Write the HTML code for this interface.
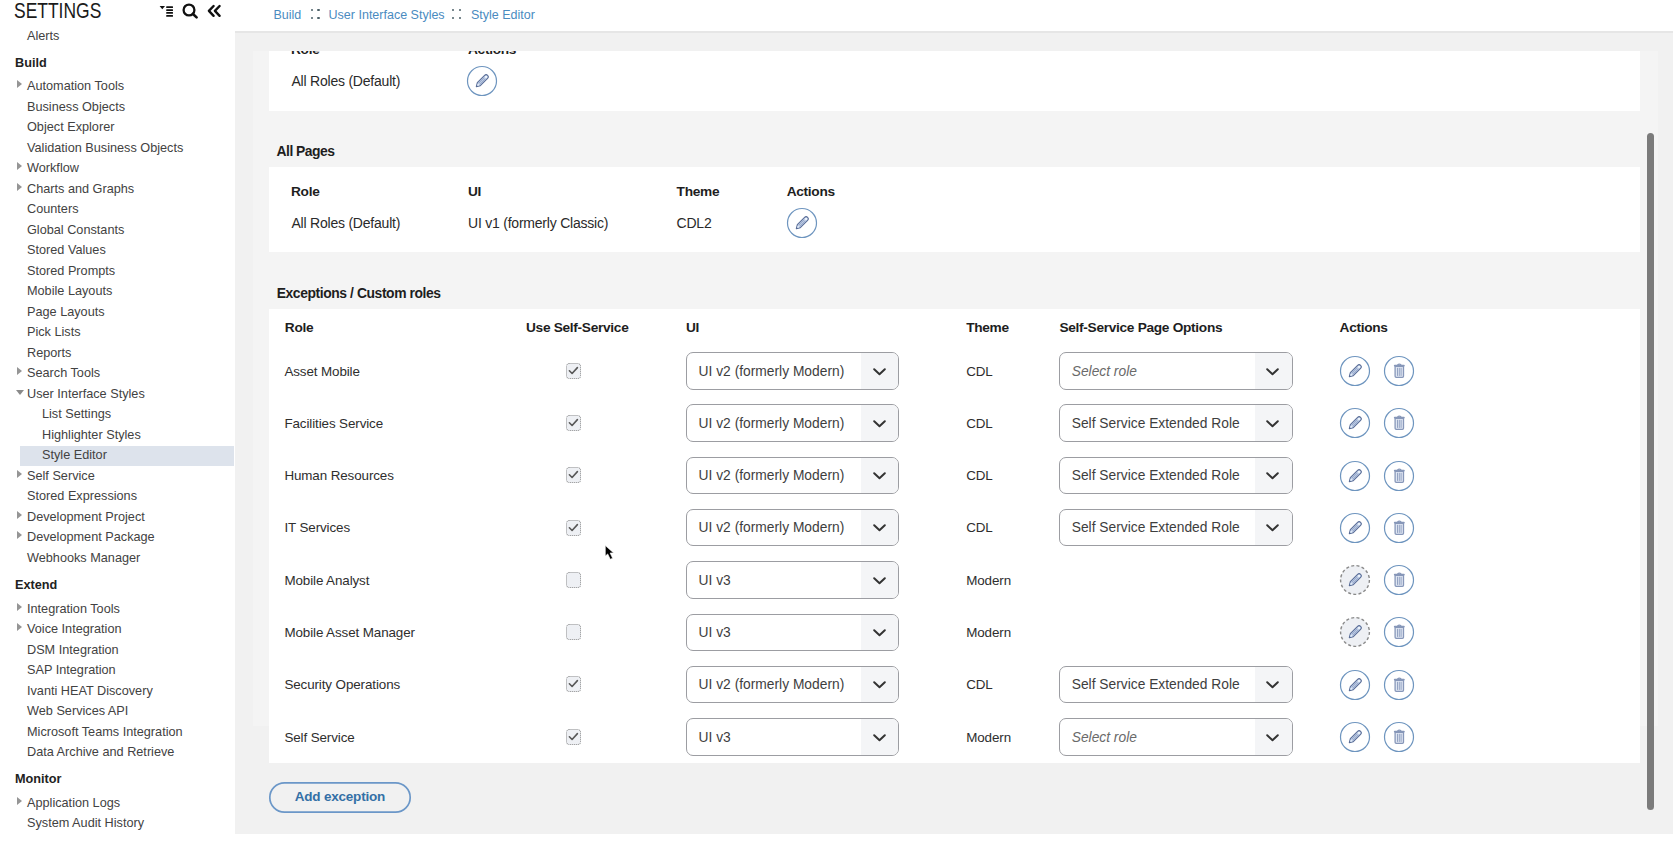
<!DOCTYPE html><html><head><meta charset="utf-8"><style>
html,body{margin:0;padding:0;}
body{width:1673px;height:848px;overflow:hidden;position:relative;background:#fff;font-family:"Liberation Sans",sans-serif;}
.t{position:absolute;line-height:20px;white-space:nowrap;}
.a{position:absolute;}
.card{position:absolute;background:#fff;}
.sel{position:absolute;box-sizing:border-box;border:1.8px solid #9c9da2;border-radius:7px;background:#fff;overflow:hidden;}
.sel .arr{position:absolute;right:0;top:0;bottom:0;width:37px;background:#f4f5f7;}
.cb{position:absolute;box-sizing:border-box;width:15px;height:16px;border:1px dotted #8f8f8f;border-radius:3.5px;background:#eef0f4;}
.circ{position:absolute;box-sizing:border-box;width:30px;height:30px;border:1.4px solid #6e93bd;border-radius:50%;}
.circ.dis{border:1.2px dashed #8a8a8a;background:#eef0f3;}
.tri{position:absolute;width:0;height:0;border-top:4.2px solid transparent;border-bottom:4.2px solid transparent;border-left:5.6px solid #959595;}
.trid{position:absolute;width:0;height:0;border-left:4.1px solid transparent;border-right:4.1px solid transparent;border-top:5.4px solid #8a8a8a;}
</style></head><body>

<div class="t" style="left:13.8px;top:0.5px;font-size:21.5px;color:#1b1b1b;transform:scaleX(0.812);transform-origin:0 0;">SETTINGS</div>
<svg class="a" style="left:155px;top:0px" width="75" height="24" viewBox="0 0 75 24">
<path d="M4.6 5.9 L10 5.9 L7.3 9.3 Z" fill="#111"/>
<rect x="11.2" y="6.2" width="6.8" height="1.7" rx="0.5" fill="#111"/>
<rect x="11.2" y="9.2" width="6.8" height="1.7" rx="0.5" fill="#111"/>
<rect x="11.2" y="12.1" width="6.8" height="1.7" rx="0.5" fill="#111"/>
<rect x="11.2" y="15.0" width="6.8" height="1.7" rx="0.5" fill="#111"/>
<circle cx="34" cy="10" r="5.4" fill="none" stroke="#111" stroke-width="2.3"/>
<path d="M38 14 L41.6 17.4" stroke="#111" stroke-width="2.6" stroke-linecap="round"/>
<path d="M58.6 6 L53.9 10.9 L58.6 15.8" fill="none" stroke="#111" stroke-width="2.4" stroke-linecap="round" stroke-linejoin="round"/>
<path d="M64.6 6 L59.9 10.9 L64.6 15.8" fill="none" stroke="#111" stroke-width="2.4" stroke-linecap="round" stroke-linejoin="round"/>
</svg>
<div class="t" style="left:27px;top:25.799999999999997px;font-size:12.7px;font-weight:normal;color:#424242;font-style:normal;letter-spacing:0px;">Alerts</div>
<div class="t" style="left:15px;top:52.5px;font-size:12.7px;font-weight:bold;color:#222;font-style:normal;letter-spacing:0px;">Build</div>
<div class="tri" style="left:16.8px;top:80.0px"></div>
<div class="t" style="left:27px;top:76.0px;font-size:12.7px;font-weight:normal;color:#424242;font-style:normal;letter-spacing:0px;">Automation Tools</div>
<div class="t" style="left:27px;top:96.5px;font-size:12.7px;font-weight:normal;color:#424242;font-style:normal;letter-spacing:0px;">Business Objects</div>
<div class="t" style="left:27px;top:117.0px;font-size:12.7px;font-weight:normal;color:#424242;font-style:normal;letter-spacing:0px;">Object Explorer</div>
<div class="t" style="left:27px;top:137.5px;font-size:12.7px;font-weight:normal;color:#424242;font-style:normal;letter-spacing:0px;">Validation Business Objects</div>
<div class="tri" style="left:16.8px;top:162.0px"></div>
<div class="t" style="left:27px;top:158.0px;font-size:12.7px;font-weight:normal;color:#424242;font-style:normal;letter-spacing:0px;">Workflow</div>
<div class="tri" style="left:16.8px;top:182.5px"></div>
<div class="t" style="left:27px;top:178.5px;font-size:12.7px;font-weight:normal;color:#424242;font-style:normal;letter-spacing:0px;">Charts and Graphs</div>
<div class="t" style="left:27px;top:199.0px;font-size:12.7px;font-weight:normal;color:#424242;font-style:normal;letter-spacing:0px;">Counters</div>
<div class="t" style="left:27px;top:219.5px;font-size:12.7px;font-weight:normal;color:#424242;font-style:normal;letter-spacing:0px;">Global Constants</div>
<div class="t" style="left:27px;top:240.0px;font-size:12.7px;font-weight:normal;color:#424242;font-style:normal;letter-spacing:0px;">Stored Values</div>
<div class="t" style="left:27px;top:260.5px;font-size:12.7px;font-weight:normal;color:#424242;font-style:normal;letter-spacing:0px;">Stored Prompts</div>
<div class="t" style="left:27px;top:281.0px;font-size:12.7px;font-weight:normal;color:#424242;font-style:normal;letter-spacing:0px;">Mobile Layouts</div>
<div class="t" style="left:27px;top:301.5px;font-size:12.7px;font-weight:normal;color:#424242;font-style:normal;letter-spacing:0px;">Page Layouts</div>
<div class="t" style="left:27px;top:322.0px;font-size:12.7px;font-weight:normal;color:#424242;font-style:normal;letter-spacing:0px;">Pick Lists</div>
<div class="t" style="left:27px;top:342.5px;font-size:12.7px;font-weight:normal;color:#424242;font-style:normal;letter-spacing:0px;">Reports</div>
<div class="tri" style="left:16.8px;top:367.0px"></div>
<div class="t" style="left:27px;top:363.0px;font-size:12.7px;font-weight:normal;color:#424242;font-style:normal;letter-spacing:0px;">Search Tools</div>
<div class="trid" style="left:15.5px;top:389.5px"></div>
<div class="t" style="left:27px;top:383.5px;font-size:12.7px;font-weight:normal;color:#424242;font-style:normal;letter-spacing:0px;">User Interface Styles</div>
<div class="t" style="left:42px;top:404.0px;font-size:12.7px;font-weight:normal;color:#424242;font-style:normal;letter-spacing:0px;">List Settings</div>
<div class="t" style="left:42px;top:424.5px;font-size:12.7px;font-weight:normal;color:#424242;font-style:normal;letter-spacing:0px;">Highlighter Styles</div>
<div class="a" style="left:20px;top:445.7px;width:213.5px;height:20.3px;background:#dde3ec"></div>
<div class="t" style="left:42px;top:445.0px;font-size:12.7px;font-weight:normal;color:#424242;font-style:normal;letter-spacing:0px;">Style Editor</div>
<div class="tri" style="left:16.8px;top:469.5px"></div>
<div class="t" style="left:27px;top:465.5px;font-size:12.7px;font-weight:normal;color:#424242;font-style:normal;letter-spacing:0px;">Self Service</div>
<div class="t" style="left:27px;top:486.0px;font-size:12.7px;font-weight:normal;color:#424242;font-style:normal;letter-spacing:0px;">Stored Expressions</div>
<div class="tri" style="left:16.8px;top:510.5px"></div>
<div class="t" style="left:27px;top:506.5px;font-size:12.7px;font-weight:normal;color:#424242;font-style:normal;letter-spacing:0px;">Development Project</div>
<div class="tri" style="left:16.8px;top:531.0px"></div>
<div class="t" style="left:27px;top:527.0px;font-size:12.7px;font-weight:normal;color:#424242;font-style:normal;letter-spacing:0px;">Development Package</div>
<div class="t" style="left:27px;top:547.5px;font-size:12.7px;font-weight:normal;color:#424242;font-style:normal;letter-spacing:0px;">Webhooks Manager</div>
<div class="t" style="left:15px;top:575.2px;font-size:12.7px;font-weight:bold;color:#222;font-style:normal;letter-spacing:0px;">Extend</div>
<div class="tri" style="left:16.8px;top:602.5px"></div>
<div class="t" style="left:27px;top:598.5px;font-size:12.7px;font-weight:normal;color:#424242;font-style:normal;letter-spacing:0px;">Integration Tools</div>
<div class="tri" style="left:16.8px;top:623.0px"></div>
<div class="t" style="left:27px;top:619.0px;font-size:12.7px;font-weight:normal;color:#424242;font-style:normal;letter-spacing:0px;">Voice Integration</div>
<div class="t" style="left:27px;top:639.5px;font-size:12.7px;font-weight:normal;color:#424242;font-style:normal;letter-spacing:0px;">DSM Integration</div>
<div class="t" style="left:27px;top:660.0px;font-size:12.7px;font-weight:normal;color:#424242;font-style:normal;letter-spacing:0px;">SAP Integration</div>
<div class="t" style="left:27px;top:680.5px;font-size:12.7px;font-weight:normal;color:#424242;font-style:normal;letter-spacing:0px;">Ivanti HEAT Discovery</div>
<div class="t" style="left:27px;top:701.0px;font-size:12.7px;font-weight:normal;color:#424242;font-style:normal;letter-spacing:0px;">Web Services API</div>
<div class="t" style="left:27px;top:721.5px;font-size:12.7px;font-weight:normal;color:#424242;font-style:normal;letter-spacing:0px;">Microsoft Teams Integration</div>
<div class="t" style="left:27px;top:742.0px;font-size:12.7px;font-weight:normal;color:#424242;font-style:normal;letter-spacing:0px;">Data Archive and Retrieve</div>
<div class="t" style="left:15px;top:769.2px;font-size:12.7px;font-weight:bold;color:#222;font-style:normal;letter-spacing:0px;">Monitor</div>
<div class="tri" style="left:16.8px;top:796.5px"></div>
<div class="t" style="left:27px;top:792.5px;font-size:12.7px;font-weight:normal;color:#424242;font-style:normal;letter-spacing:0px;">Application Logs</div>
<div class="t" style="left:27px;top:813px;font-size:12.7px;font-weight:normal;color:#424242;font-style:normal;letter-spacing:0px;">System Audit History</div>
<div class="t" style="left:273.4px;top:4.699999999999999px;font-size:12.5px;font-weight:normal;color:#4a8bbf;font-style:normal;letter-spacing:0px;">Build</div>
<div class="a" style="left:310.7px;top:8.7px;width:2.2px;height:2.2px;border-radius:50%;background:#4d6168"></div>
<div class="a" style="left:310.7px;top:16.5px;width:2.2px;height:2.2px;border-radius:50%;background:#4d6168"></div>
<div class="a" style="left:317.4px;top:8.7px;width:2.2px;height:2.2px;border-radius:50%;background:#4d6168"></div>
<div class="a" style="left:317.4px;top:16.5px;width:2.2px;height:2.2px;border-radius:50%;background:#4d6168"></div>
<div class="t" style="left:328.6px;top:4.699999999999999px;font-size:12.5px;font-weight:normal;color:#4a8bbf;font-style:normal;letter-spacing:0px;">User Interface Styles</div>
<div class="a" style="left:452.3px;top:8.7px;width:2.2px;height:2.2px;border-radius:50%;background:#4d6168"></div>
<div class="a" style="left:452.3px;top:16.5px;width:2.2px;height:2.2px;border-radius:50%;background:#4d6168"></div>
<div class="a" style="left:459.0px;top:8.7px;width:2.2px;height:2.2px;border-radius:50%;background:#4d6168"></div>
<div class="a" style="left:459.0px;top:16.5px;width:2.2px;height:2.2px;border-radius:50%;background:#4d6168"></div>
<div class="t" style="left:470.9px;top:4.699999999999999px;font-size:12.5px;font-weight:normal;color:#4a8bbf;font-style:normal;letter-spacing:0px;">Style Editor</div>
<div class="a" style="left:235px;top:31px;width:1438px;height:802.5px;background:#f1f1f1"></div>
<div class="a" style="left:235px;top:31px;width:1438px;height:2px;background:#e6e6e6"></div>
<div class="a" style="left:253px;top:51px;width:1405px;height:674.5px;background:#f4f4f4"></div>
<div class="card" style="left:269px;top:24.6px;width:1371px;height:86.4px"></div>
<div class="t" style="left:291px;top:40.2px;font-size:13.7px;font-weight:bold;color:#1e1e1e;font-style:normal;letter-spacing:-0.3px;">Role</div>
<div class="t" style="left:468px;top:40.2px;font-size:13.7px;font-weight:bold;color:#1e1e1e;font-style:normal;letter-spacing:-0.3px;">Actions</div>
<div class="t" style="left:291.5px;top:70.7px;font-size:14px;font-weight:normal;color:#2a2a2a;font-style:normal;letter-spacing:-0.22px;">All Roles (Default)</div>
<svg class="a" style="left:466.4px;top:64.7px" width="32" height="32" viewBox="0 0 32 32"><circle cx="16" cy="16" r="14.5" fill="none" stroke="#6e95bf" stroke-width="1.2"/>
<g transform="rotate(45 16 16)"><path d="M13.85 10.2 A2.15 2.15 0 0 1 18.15 10.2 V20.5 L16 24.1 L13.85 20.5 Z" fill="#bfcde6" stroke="#586c96" stroke-width="1" stroke-linejoin="round"/>
<circle cx="16" cy="10.2" r="1.2" fill="#eef5fc"/><circle cx="16" cy="21.4" r="0.9" fill="#e4eefa"/>
<path d="M15.3 12.4 V19.6 M16.7 12.4 V19.6" stroke="#8094ba" stroke-width="0.55"/></g></svg>
<div class="a" style="left:235px;top:31px;width:1438px;height:20px;background:#f1f1f1"></div>
<div class="a" style="left:235px;top:31px;width:1438px;height:2px;background:#e6e6e6"></div>
<div class="t" style="left:276.5px;top:140.9px;font-size:13.9px;font-weight:bold;color:#1e1e1e;font-style:normal;letter-spacing:-0.5px;">All Pages</div>
<div class="card" style="left:269px;top:167px;width:1371px;height:84.6px"></div>
<div class="t" style="left:291px;top:182px;font-size:13.7px;font-weight:bold;color:#1e1e1e;font-style:normal;letter-spacing:-0.3px;">Role</div>
<div class="t" style="left:468px;top:182px;font-size:13.7px;font-weight:bold;color:#1e1e1e;font-style:normal;letter-spacing:-0.3px;">UI</div>
<div class="t" style="left:676.6px;top:182px;font-size:13.7px;font-weight:bold;color:#1e1e1e;font-style:normal;letter-spacing:-0.3px;">Theme</div>
<div class="t" style="left:786.7px;top:182px;font-size:13.7px;font-weight:bold;color:#1e1e1e;font-style:normal;letter-spacing:-0.3px;">Actions</div>
<div class="t" style="left:291.5px;top:213.3px;font-size:14px;font-weight:normal;color:#2a2a2a;font-style:normal;letter-spacing:-0.22px;">All Roles (Default)</div>
<div class="t" style="left:468px;top:213.3px;font-size:14px;font-weight:normal;color:#2a2a2a;font-style:normal;letter-spacing:-0.22px;">UI v1 (formerly Classic)</div>
<div class="t" style="left:676.6px;top:213.3px;font-size:14px;font-weight:normal;color:#2a2a2a;font-style:normal;letter-spacing:-0.22px;">CDL2</div>
<svg class="a" style="left:785.5px;top:206.6px" width="32" height="32" viewBox="0 0 32 32"><circle cx="16" cy="16" r="14.5" fill="none" stroke="#6e95bf" stroke-width="1.2"/>
<g transform="rotate(45 16 16)"><path d="M13.85 10.2 A2.15 2.15 0 0 1 18.15 10.2 V20.5 L16 24.1 L13.85 20.5 Z" fill="#bfcde6" stroke="#586c96" stroke-width="1" stroke-linejoin="round"/>
<circle cx="16" cy="10.2" r="1.2" fill="#eef5fc"/><circle cx="16" cy="21.4" r="0.9" fill="#e4eefa"/>
<path d="M15.3 12.4 V19.6 M16.7 12.4 V19.6" stroke="#8094ba" stroke-width="0.55"/></g></svg>
<div class="t" style="left:276.7px;top:282.5px;font-size:13.9px;font-weight:bold;color:#1e1e1e;font-style:normal;letter-spacing:-0.42px;">Exceptions / Custom roles</div>
<div class="card" style="left:269px;top:308.5px;width:1371px;height:454.5px"></div>
<div class="t" style="left:284.8px;top:318.3px;font-size:13.7px;font-weight:bold;color:#1e1e1e;font-style:normal;letter-spacing:-0.3px;">Role</div>
<div class="t" style="left:526px;top:318.3px;font-size:13.7px;font-weight:bold;color:#1e1e1e;font-style:normal;letter-spacing:-0.3px;">Use Self-Service</div>
<div class="t" style="left:686px;top:318.3px;font-size:13.7px;font-weight:bold;color:#1e1e1e;font-style:normal;letter-spacing:-0.3px;">UI</div>
<div class="t" style="left:966.2px;top:318.3px;font-size:13.7px;font-weight:bold;color:#1e1e1e;font-style:normal;letter-spacing:-0.3px;">Theme</div>
<div class="t" style="left:1059.4px;top:318.3px;font-size:13.7px;font-weight:bold;color:#1e1e1e;font-style:normal;letter-spacing:-0.3px;">Self-Service Page Options</div>
<div class="t" style="left:1339.6px;top:318.3px;font-size:13.7px;font-weight:bold;color:#1e1e1e;font-style:normal;letter-spacing:-0.3px;">Actions</div>
<div class="t" style="left:284.4px;top:361.5px;font-size:13.4px;font-weight:normal;color:#2e2e2e;font-style:normal;letter-spacing:-0.1px;">Asset Mobile</div>
<div class="cb" style="left:566.2px;top:362.6px"></div>
<svg class="a" style="left:566.2px;top:362.6px" width="15" height="15" viewBox="0 0 15 15"><path d="M3.4 7.8 L6.1 10.5 L11.4 4.6" fill="none" stroke="#585858" stroke-width="1.6" stroke-linecap="round" stroke-linejoin="round"/></svg>
<div class="sel" style="left:686px;top:352.0px;width:213px;height:37.5px"><div class="arr"></div><svg class="a" style="right:12.5px;top:14.5px" width="13" height="8" viewBox="0 0 13 8"><path d="M1.2 1.3 L6.5 6.3 L11.8 1.3" fill="none" stroke="#333" stroke-width="2" stroke-linecap="round" stroke-linejoin="round"/></svg></div>
<div class="t" style="left:698.6px;top:361.5px;font-size:13.8px;font-weight:normal;color:#3e3e3e;font-style:normal;letter-spacing:0px;">UI v2 (formerly Modern)</div>
<div class="t" style="left:966.2px;top:361.5px;font-size:13.4px;font-weight:normal;color:#2e2e2e;font-style:normal;letter-spacing:-0.1px;">CDL</div>
<div class="sel" style="left:1059.4px;top:352.0px;width:233.6px;height:37.5px"><div class="arr"></div><svg class="a" style="right:12.5px;top:14.5px" width="13" height="8" viewBox="0 0 13 8"><path d="M1.2 1.3 L6.5 6.3 L11.8 1.3" fill="none" stroke="#333" stroke-width="2" stroke-linecap="round" stroke-linejoin="round"/></svg></div>
<div class="t" style="left:1071.7px;top:361.5px;font-size:13.8px;font-weight:normal;color:#6a6a6a;font-style:italic;letter-spacing:0px;">Select role</div>
<svg class="a" style="left:1338.6px;top:354.9px" width="32" height="32" viewBox="0 0 32 32"><circle cx="16" cy="16" r="14.5" fill="none" stroke="#6e95bf" stroke-width="1.2"/>
<g transform="rotate(45 16 16)"><path d="M13.85 10.2 A2.15 2.15 0 0 1 18.15 10.2 V20.5 L16 24.1 L13.85 20.5 Z" fill="#bfcde6" stroke="#586c96" stroke-width="1" stroke-linejoin="round"/>
<circle cx="16" cy="10.2" r="1.2" fill="#eef5fc"/><circle cx="16" cy="21.4" r="0.9" fill="#e4eefa"/>
<path d="M15.3 12.4 V19.6 M16.7 12.4 V19.6" stroke="#8094ba" stroke-width="0.55"/></g></svg>
<svg class="a" style="left:1383.0px;top:354.9px" width="32" height="32" viewBox="0 0 32 32">
<circle cx="16" cy="16" r="14.5" fill="none" stroke="#6e95bf" stroke-width="1.2"/>
<path d="M11.7 10.6 H20.9" stroke="#8797b9" stroke-width="1.7" stroke-linecap="round"/>
<path d="M14.4 10 Q16.3 8.3 18.2 10" fill="none" stroke="#8797b9" stroke-width="1.1"/>
<path d="M12.1 11.4 H20.5 V21.3 Q20.5 22.4 19.4 22.4 H13.2 Q12.1 22.4 12.1 21.3 Z" fill="#dfe6f2" stroke="#8797b9" stroke-width="1.3"/>
<path d="M14.5 12.8 V20.9 M16.3 12.8 V20.9 M18.1 12.8 V20.9" stroke="#8b9bbc" stroke-width="0.9"/></svg>
<div class="t" style="left:284.4px;top:413.8px;font-size:13.4px;font-weight:normal;color:#2e2e2e;font-style:normal;letter-spacing:-0.1px;">Facilities Service</div>
<div class="cb" style="left:566.2px;top:414.9px"></div>
<svg class="a" style="left:566.2px;top:414.9px" width="15" height="15" viewBox="0 0 15 15"><path d="M3.4 7.8 L6.1 10.5 L11.4 4.6" fill="none" stroke="#585858" stroke-width="1.6" stroke-linecap="round" stroke-linejoin="round"/></svg>
<div class="sel" style="left:686px;top:404.3px;width:213px;height:37.5px"><div class="arr"></div><svg class="a" style="right:12.5px;top:14.5px" width="13" height="8" viewBox="0 0 13 8"><path d="M1.2 1.3 L6.5 6.3 L11.8 1.3" fill="none" stroke="#333" stroke-width="2" stroke-linecap="round" stroke-linejoin="round"/></svg></div>
<div class="t" style="left:698.6px;top:413.8px;font-size:13.8px;font-weight:normal;color:#3e3e3e;font-style:normal;letter-spacing:0px;">UI v2 (formerly Modern)</div>
<div class="t" style="left:966.2px;top:413.8px;font-size:13.4px;font-weight:normal;color:#2e2e2e;font-style:normal;letter-spacing:-0.1px;">CDL</div>
<div class="sel" style="left:1059.4px;top:404.3px;width:233.6px;height:37.5px"><div class="arr"></div><svg class="a" style="right:12.5px;top:14.5px" width="13" height="8" viewBox="0 0 13 8"><path d="M1.2 1.3 L6.5 6.3 L11.8 1.3" fill="none" stroke="#333" stroke-width="2" stroke-linecap="round" stroke-linejoin="round"/></svg></div>
<div class="t" style="left:1071.7px;top:413.8px;font-size:13.8px;font-weight:normal;color:#3e3e3e;font-style:normal;letter-spacing:0px;">Self Service Extended Role</div>
<svg class="a" style="left:1338.6px;top:407.2px" width="32" height="32" viewBox="0 0 32 32"><circle cx="16" cy="16" r="14.5" fill="none" stroke="#6e95bf" stroke-width="1.2"/>
<g transform="rotate(45 16 16)"><path d="M13.85 10.2 A2.15 2.15 0 0 1 18.15 10.2 V20.5 L16 24.1 L13.85 20.5 Z" fill="#bfcde6" stroke="#586c96" stroke-width="1" stroke-linejoin="round"/>
<circle cx="16" cy="10.2" r="1.2" fill="#eef5fc"/><circle cx="16" cy="21.4" r="0.9" fill="#e4eefa"/>
<path d="M15.3 12.4 V19.6 M16.7 12.4 V19.6" stroke="#8094ba" stroke-width="0.55"/></g></svg>
<svg class="a" style="left:1383.0px;top:407.2px" width="32" height="32" viewBox="0 0 32 32">
<circle cx="16" cy="16" r="14.5" fill="none" stroke="#6e95bf" stroke-width="1.2"/>
<path d="M11.7 10.6 H20.9" stroke="#8797b9" stroke-width="1.7" stroke-linecap="round"/>
<path d="M14.4 10 Q16.3 8.3 18.2 10" fill="none" stroke="#8797b9" stroke-width="1.1"/>
<path d="M12.1 11.4 H20.5 V21.3 Q20.5 22.4 19.4 22.4 H13.2 Q12.1 22.4 12.1 21.3 Z" fill="#dfe6f2" stroke="#8797b9" stroke-width="1.3"/>
<path d="M14.5 12.8 V20.9 M16.3 12.8 V20.9 M18.1 12.8 V20.9" stroke="#8b9bbc" stroke-width="0.9"/></svg>
<div class="t" style="left:284.4px;top:466.1px;font-size:13.4px;font-weight:normal;color:#2e2e2e;font-style:normal;letter-spacing:-0.1px;">Human Resources</div>
<div class="cb" style="left:566.2px;top:467.2px"></div>
<svg class="a" style="left:566.2px;top:467.2px" width="15" height="15" viewBox="0 0 15 15"><path d="M3.4 7.8 L6.1 10.5 L11.4 4.6" fill="none" stroke="#585858" stroke-width="1.6" stroke-linecap="round" stroke-linejoin="round"/></svg>
<div class="sel" style="left:686px;top:456.6px;width:213px;height:37.5px"><div class="arr"></div><svg class="a" style="right:12.5px;top:14.5px" width="13" height="8" viewBox="0 0 13 8"><path d="M1.2 1.3 L6.5 6.3 L11.8 1.3" fill="none" stroke="#333" stroke-width="2" stroke-linecap="round" stroke-linejoin="round"/></svg></div>
<div class="t" style="left:698.6px;top:466.1px;font-size:13.8px;font-weight:normal;color:#3e3e3e;font-style:normal;letter-spacing:0px;">UI v2 (formerly Modern)</div>
<div class="t" style="left:966.2px;top:466.1px;font-size:13.4px;font-weight:normal;color:#2e2e2e;font-style:normal;letter-spacing:-0.1px;">CDL</div>
<div class="sel" style="left:1059.4px;top:456.6px;width:233.6px;height:37.5px"><div class="arr"></div><svg class="a" style="right:12.5px;top:14.5px" width="13" height="8" viewBox="0 0 13 8"><path d="M1.2 1.3 L6.5 6.3 L11.8 1.3" fill="none" stroke="#333" stroke-width="2" stroke-linecap="round" stroke-linejoin="round"/></svg></div>
<div class="t" style="left:1071.7px;top:466.1px;font-size:13.8px;font-weight:normal;color:#3e3e3e;font-style:normal;letter-spacing:0px;">Self Service Extended Role</div>
<svg class="a" style="left:1338.6px;top:459.5px" width="32" height="32" viewBox="0 0 32 32"><circle cx="16" cy="16" r="14.5" fill="none" stroke="#6e95bf" stroke-width="1.2"/>
<g transform="rotate(45 16 16)"><path d="M13.85 10.2 A2.15 2.15 0 0 1 18.15 10.2 V20.5 L16 24.1 L13.85 20.5 Z" fill="#bfcde6" stroke="#586c96" stroke-width="1" stroke-linejoin="round"/>
<circle cx="16" cy="10.2" r="1.2" fill="#eef5fc"/><circle cx="16" cy="21.4" r="0.9" fill="#e4eefa"/>
<path d="M15.3 12.4 V19.6 M16.7 12.4 V19.6" stroke="#8094ba" stroke-width="0.55"/></g></svg>
<svg class="a" style="left:1383.0px;top:459.5px" width="32" height="32" viewBox="0 0 32 32">
<circle cx="16" cy="16" r="14.5" fill="none" stroke="#6e95bf" stroke-width="1.2"/>
<path d="M11.7 10.6 H20.9" stroke="#8797b9" stroke-width="1.7" stroke-linecap="round"/>
<path d="M14.4 10 Q16.3 8.3 18.2 10" fill="none" stroke="#8797b9" stroke-width="1.1"/>
<path d="M12.1 11.4 H20.5 V21.3 Q20.5 22.4 19.4 22.4 H13.2 Q12.1 22.4 12.1 21.3 Z" fill="#dfe6f2" stroke="#8797b9" stroke-width="1.3"/>
<path d="M14.5 12.8 V20.9 M16.3 12.8 V20.9 M18.1 12.8 V20.9" stroke="#8b9bbc" stroke-width="0.9"/></svg>
<div class="t" style="left:284.4px;top:518.4px;font-size:13.4px;font-weight:normal;color:#2e2e2e;font-style:normal;letter-spacing:-0.1px;">IT Services</div>
<div class="cb" style="left:566.2px;top:519.5px"></div>
<svg class="a" style="left:566.2px;top:519.5px" width="15" height="15" viewBox="0 0 15 15"><path d="M3.4 7.8 L6.1 10.5 L11.4 4.6" fill="none" stroke="#585858" stroke-width="1.6" stroke-linecap="round" stroke-linejoin="round"/></svg>
<div class="sel" style="left:686px;top:508.9px;width:213px;height:37.5px"><div class="arr"></div><svg class="a" style="right:12.5px;top:14.5px" width="13" height="8" viewBox="0 0 13 8"><path d="M1.2 1.3 L6.5 6.3 L11.8 1.3" fill="none" stroke="#333" stroke-width="2" stroke-linecap="round" stroke-linejoin="round"/></svg></div>
<div class="t" style="left:698.6px;top:518.4px;font-size:13.8px;font-weight:normal;color:#3e3e3e;font-style:normal;letter-spacing:0px;">UI v2 (formerly Modern)</div>
<div class="t" style="left:966.2px;top:518.4px;font-size:13.4px;font-weight:normal;color:#2e2e2e;font-style:normal;letter-spacing:-0.1px;">CDL</div>
<div class="sel" style="left:1059.4px;top:508.9px;width:233.6px;height:37.5px"><div class="arr"></div><svg class="a" style="right:12.5px;top:14.5px" width="13" height="8" viewBox="0 0 13 8"><path d="M1.2 1.3 L6.5 6.3 L11.8 1.3" fill="none" stroke="#333" stroke-width="2" stroke-linecap="round" stroke-linejoin="round"/></svg></div>
<div class="t" style="left:1071.7px;top:518.4px;font-size:13.8px;font-weight:normal;color:#3e3e3e;font-style:normal;letter-spacing:0px;">Self Service Extended Role</div>
<svg class="a" style="left:1338.6px;top:511.8px" width="32" height="32" viewBox="0 0 32 32"><circle cx="16" cy="16" r="14.5" fill="none" stroke="#6e95bf" stroke-width="1.2"/>
<g transform="rotate(45 16 16)"><path d="M13.85 10.2 A2.15 2.15 0 0 1 18.15 10.2 V20.5 L16 24.1 L13.85 20.5 Z" fill="#bfcde6" stroke="#586c96" stroke-width="1" stroke-linejoin="round"/>
<circle cx="16" cy="10.2" r="1.2" fill="#eef5fc"/><circle cx="16" cy="21.4" r="0.9" fill="#e4eefa"/>
<path d="M15.3 12.4 V19.6 M16.7 12.4 V19.6" stroke="#8094ba" stroke-width="0.55"/></g></svg>
<svg class="a" style="left:1383.0px;top:511.8px" width="32" height="32" viewBox="0 0 32 32">
<circle cx="16" cy="16" r="14.5" fill="none" stroke="#6e95bf" stroke-width="1.2"/>
<path d="M11.7 10.6 H20.9" stroke="#8797b9" stroke-width="1.7" stroke-linecap="round"/>
<path d="M14.4 10 Q16.3 8.3 18.2 10" fill="none" stroke="#8797b9" stroke-width="1.1"/>
<path d="M12.1 11.4 H20.5 V21.3 Q20.5 22.4 19.4 22.4 H13.2 Q12.1 22.4 12.1 21.3 Z" fill="#dfe6f2" stroke="#8797b9" stroke-width="1.3"/>
<path d="M14.5 12.8 V20.9 M16.3 12.8 V20.9 M18.1 12.8 V20.9" stroke="#8b9bbc" stroke-width="0.9"/></svg>
<div class="t" style="left:284.4px;top:570.7px;font-size:13.4px;font-weight:normal;color:#2e2e2e;font-style:normal;letter-spacing:-0.1px;">Mobile Analyst</div>
<div class="cb" style="left:566.2px;top:571.8px"></div>
<div class="sel" style="left:686px;top:561.2px;width:213px;height:37.5px"><div class="arr"></div><svg class="a" style="right:12.5px;top:14.5px" width="13" height="8" viewBox="0 0 13 8"><path d="M1.2 1.3 L6.5 6.3 L11.8 1.3" fill="none" stroke="#333" stroke-width="2" stroke-linecap="round" stroke-linejoin="round"/></svg></div>
<div class="t" style="left:698.6px;top:570.7px;font-size:13.8px;font-weight:normal;color:#3e3e3e;font-style:normal;letter-spacing:0px;">UI v3</div>
<div class="t" style="left:966.2px;top:570.7px;font-size:13.4px;font-weight:normal;color:#2e2e2e;font-style:normal;letter-spacing:-0.1px;">Modern</div>
<svg class="a" style="left:1338.6px;top:564.1px" width="32" height="32" viewBox="0 0 32 32"><circle cx="16" cy="16" r="14.4" fill="#eef0f4" stroke="#8a8a8a" stroke-width="1.4" stroke-dasharray="3 2.3"/>
<g transform="rotate(45 16 16)"><path d="M13.85 10.2 A2.15 2.15 0 0 1 18.15 10.2 V20.5 L16 24.1 L13.85 20.5 Z" fill="#bfcde6" stroke="#586c96" stroke-width="1" stroke-linejoin="round"/>
<circle cx="16" cy="10.2" r="1.2" fill="#eef5fc"/><circle cx="16" cy="21.4" r="0.9" fill="#e4eefa"/>
<path d="M15.3 12.4 V19.6 M16.7 12.4 V19.6" stroke="#8094ba" stroke-width="0.55"/></g></svg>
<svg class="a" style="left:1383.0px;top:564.1px" width="32" height="32" viewBox="0 0 32 32">
<circle cx="16" cy="16" r="14.5" fill="none" stroke="#6e95bf" stroke-width="1.2"/>
<path d="M11.7 10.6 H20.9" stroke="#8797b9" stroke-width="1.7" stroke-linecap="round"/>
<path d="M14.4 10 Q16.3 8.3 18.2 10" fill="none" stroke="#8797b9" stroke-width="1.1"/>
<path d="M12.1 11.4 H20.5 V21.3 Q20.5 22.4 19.4 22.4 H13.2 Q12.1 22.4 12.1 21.3 Z" fill="#dfe6f2" stroke="#8797b9" stroke-width="1.3"/>
<path d="M14.5 12.8 V20.9 M16.3 12.8 V20.9 M18.1 12.8 V20.9" stroke="#8b9bbc" stroke-width="0.9"/></svg>
<div class="t" style="left:284.4px;top:623.0px;font-size:13.4px;font-weight:normal;color:#2e2e2e;font-style:normal;letter-spacing:-0.1px;">Mobile Asset Manager</div>
<div class="cb" style="left:566.2px;top:624.1px"></div>
<div class="sel" style="left:686px;top:613.5px;width:213px;height:37.5px"><div class="arr"></div><svg class="a" style="right:12.5px;top:14.5px" width="13" height="8" viewBox="0 0 13 8"><path d="M1.2 1.3 L6.5 6.3 L11.8 1.3" fill="none" stroke="#333" stroke-width="2" stroke-linecap="round" stroke-linejoin="round"/></svg></div>
<div class="t" style="left:698.6px;top:623.0px;font-size:13.8px;font-weight:normal;color:#3e3e3e;font-style:normal;letter-spacing:0px;">UI v3</div>
<div class="t" style="left:966.2px;top:623.0px;font-size:13.4px;font-weight:normal;color:#2e2e2e;font-style:normal;letter-spacing:-0.1px;">Modern</div>
<svg class="a" style="left:1338.6px;top:616.4px" width="32" height="32" viewBox="0 0 32 32"><circle cx="16" cy="16" r="14.4" fill="#eef0f4" stroke="#8a8a8a" stroke-width="1.4" stroke-dasharray="3 2.3"/>
<g transform="rotate(45 16 16)"><path d="M13.85 10.2 A2.15 2.15 0 0 1 18.15 10.2 V20.5 L16 24.1 L13.85 20.5 Z" fill="#bfcde6" stroke="#586c96" stroke-width="1" stroke-linejoin="round"/>
<circle cx="16" cy="10.2" r="1.2" fill="#eef5fc"/><circle cx="16" cy="21.4" r="0.9" fill="#e4eefa"/>
<path d="M15.3 12.4 V19.6 M16.7 12.4 V19.6" stroke="#8094ba" stroke-width="0.55"/></g></svg>
<svg class="a" style="left:1383.0px;top:616.4px" width="32" height="32" viewBox="0 0 32 32">
<circle cx="16" cy="16" r="14.5" fill="none" stroke="#6e95bf" stroke-width="1.2"/>
<path d="M11.7 10.6 H20.9" stroke="#8797b9" stroke-width="1.7" stroke-linecap="round"/>
<path d="M14.4 10 Q16.3 8.3 18.2 10" fill="none" stroke="#8797b9" stroke-width="1.1"/>
<path d="M12.1 11.4 H20.5 V21.3 Q20.5 22.4 19.4 22.4 H13.2 Q12.1 22.4 12.1 21.3 Z" fill="#dfe6f2" stroke="#8797b9" stroke-width="1.3"/>
<path d="M14.5 12.8 V20.9 M16.3 12.8 V20.9 M18.1 12.8 V20.9" stroke="#8b9bbc" stroke-width="0.9"/></svg>
<div class="t" style="left:284.4px;top:675.3px;font-size:13.4px;font-weight:normal;color:#2e2e2e;font-style:normal;letter-spacing:-0.1px;">Security Operations</div>
<div class="cb" style="left:566.2px;top:676.4px"></div>
<svg class="a" style="left:566.2px;top:676.4px" width="15" height="15" viewBox="0 0 15 15"><path d="M3.4 7.8 L6.1 10.5 L11.4 4.6" fill="none" stroke="#585858" stroke-width="1.6" stroke-linecap="round" stroke-linejoin="round"/></svg>
<div class="sel" style="left:686px;top:665.8px;width:213px;height:37.5px"><div class="arr"></div><svg class="a" style="right:12.5px;top:14.5px" width="13" height="8" viewBox="0 0 13 8"><path d="M1.2 1.3 L6.5 6.3 L11.8 1.3" fill="none" stroke="#333" stroke-width="2" stroke-linecap="round" stroke-linejoin="round"/></svg></div>
<div class="t" style="left:698.6px;top:675.3px;font-size:13.8px;font-weight:normal;color:#3e3e3e;font-style:normal;letter-spacing:0px;">UI v2 (formerly Modern)</div>
<div class="t" style="left:966.2px;top:675.3px;font-size:13.4px;font-weight:normal;color:#2e2e2e;font-style:normal;letter-spacing:-0.1px;">CDL</div>
<div class="sel" style="left:1059.4px;top:665.8px;width:233.6px;height:37.5px"><div class="arr"></div><svg class="a" style="right:12.5px;top:14.5px" width="13" height="8" viewBox="0 0 13 8"><path d="M1.2 1.3 L6.5 6.3 L11.8 1.3" fill="none" stroke="#333" stroke-width="2" stroke-linecap="round" stroke-linejoin="round"/></svg></div>
<div class="t" style="left:1071.7px;top:675.3px;font-size:13.8px;font-weight:normal;color:#3e3e3e;font-style:normal;letter-spacing:0px;">Self Service Extended Role</div>
<svg class="a" style="left:1338.6px;top:668.7px" width="32" height="32" viewBox="0 0 32 32"><circle cx="16" cy="16" r="14.5" fill="none" stroke="#6e95bf" stroke-width="1.2"/>
<g transform="rotate(45 16 16)"><path d="M13.85 10.2 A2.15 2.15 0 0 1 18.15 10.2 V20.5 L16 24.1 L13.85 20.5 Z" fill="#bfcde6" stroke="#586c96" stroke-width="1" stroke-linejoin="round"/>
<circle cx="16" cy="10.2" r="1.2" fill="#eef5fc"/><circle cx="16" cy="21.4" r="0.9" fill="#e4eefa"/>
<path d="M15.3 12.4 V19.6 M16.7 12.4 V19.6" stroke="#8094ba" stroke-width="0.55"/></g></svg>
<svg class="a" style="left:1383.0px;top:668.7px" width="32" height="32" viewBox="0 0 32 32">
<circle cx="16" cy="16" r="14.5" fill="none" stroke="#6e95bf" stroke-width="1.2"/>
<path d="M11.7 10.6 H20.9" stroke="#8797b9" stroke-width="1.7" stroke-linecap="round"/>
<path d="M14.4 10 Q16.3 8.3 18.2 10" fill="none" stroke="#8797b9" stroke-width="1.1"/>
<path d="M12.1 11.4 H20.5 V21.3 Q20.5 22.4 19.4 22.4 H13.2 Q12.1 22.4 12.1 21.3 Z" fill="#dfe6f2" stroke="#8797b9" stroke-width="1.3"/>
<path d="M14.5 12.8 V20.9 M16.3 12.8 V20.9 M18.1 12.8 V20.9" stroke="#8b9bbc" stroke-width="0.9"/></svg>
<div class="t" style="left:284.4px;top:727.5999999999999px;font-size:13.4px;font-weight:normal;color:#2e2e2e;font-style:normal;letter-spacing:-0.1px;">Self Service</div>
<div class="cb" style="left:566.2px;top:728.7px"></div>
<svg class="a" style="left:566.2px;top:728.7px" width="15" height="15" viewBox="0 0 15 15"><path d="M3.4 7.8 L6.1 10.5 L11.4 4.6" fill="none" stroke="#585858" stroke-width="1.6" stroke-linecap="round" stroke-linejoin="round"/></svg>
<div class="sel" style="left:686px;top:718.1px;width:213px;height:37.5px"><div class="arr"></div><svg class="a" style="right:12.5px;top:14.5px" width="13" height="8" viewBox="0 0 13 8"><path d="M1.2 1.3 L6.5 6.3 L11.8 1.3" fill="none" stroke="#333" stroke-width="2" stroke-linecap="round" stroke-linejoin="round"/></svg></div>
<div class="t" style="left:698.6px;top:727.5999999999999px;font-size:13.8px;font-weight:normal;color:#3e3e3e;font-style:normal;letter-spacing:0px;">UI v3</div>
<div class="t" style="left:966.2px;top:727.5999999999999px;font-size:13.4px;font-weight:normal;color:#2e2e2e;font-style:normal;letter-spacing:-0.1px;">Modern</div>
<div class="sel" style="left:1059.4px;top:718.1px;width:233.6px;height:37.5px"><div class="arr"></div><svg class="a" style="right:12.5px;top:14.5px" width="13" height="8" viewBox="0 0 13 8"><path d="M1.2 1.3 L6.5 6.3 L11.8 1.3" fill="none" stroke="#333" stroke-width="2" stroke-linecap="round" stroke-linejoin="round"/></svg></div>
<div class="t" style="left:1071.7px;top:727.5999999999999px;font-size:13.8px;font-weight:normal;color:#6a6a6a;font-style:italic;letter-spacing:0px;">Select role</div>
<svg class="a" style="left:1338.6px;top:721.0px" width="32" height="32" viewBox="0 0 32 32"><circle cx="16" cy="16" r="14.5" fill="none" stroke="#6e95bf" stroke-width="1.2"/>
<g transform="rotate(45 16 16)"><path d="M13.85 10.2 A2.15 2.15 0 0 1 18.15 10.2 V20.5 L16 24.1 L13.85 20.5 Z" fill="#bfcde6" stroke="#586c96" stroke-width="1" stroke-linejoin="round"/>
<circle cx="16" cy="10.2" r="1.2" fill="#eef5fc"/><circle cx="16" cy="21.4" r="0.9" fill="#e4eefa"/>
<path d="M15.3 12.4 V19.6 M16.7 12.4 V19.6" stroke="#8094ba" stroke-width="0.55"/></g></svg>
<svg class="a" style="left:1383.0px;top:721.0px" width="32" height="32" viewBox="0 0 32 32">
<circle cx="16" cy="16" r="14.5" fill="none" stroke="#6e95bf" stroke-width="1.2"/>
<path d="M11.7 10.6 H20.9" stroke="#8797b9" stroke-width="1.7" stroke-linecap="round"/>
<path d="M14.4 10 Q16.3 8.3 18.2 10" fill="none" stroke="#8797b9" stroke-width="1.1"/>
<path d="M12.1 11.4 H20.5 V21.3 Q20.5 22.4 19.4 22.4 H13.2 Q12.1 22.4 12.1 21.3 Z" fill="#dfe6f2" stroke="#8797b9" stroke-width="1.3"/>
<path d="M14.5 12.8 V20.9 M16.3 12.8 V20.9 M18.1 12.8 V20.9" stroke="#8b9bbc" stroke-width="0.9"/></svg>
<svg class="a" style="left:268px;top:780.5px" width="144" height="33" viewBox="0 0 144 33"><rect x="1.8" y="1.8" width="140.4" height="29.4" rx="14.7" fill="none" stroke="#6b97c8" stroke-width="1.7"/></svg>
<div class="t" style="left:294.7px;top:787.3px;font-size:13.5px;font-weight:bold;color:#3470a6;font-style:normal;letter-spacing:-0.2px;">Add exception</div>
<div class="a" style="left:1647px;top:133px;width:6.5px;height:677px;border-radius:3.5px;background:#7b7b7b"></div>
<svg class="a" style="left:603px;top:543px" width="14" height="18" viewBox="0 0 14 18"><path d="M2.3 2.6 L2.3 13.1 L4.7 10.9 L7.3 16.3 L9.6 15.2 L7.1 10.0 L10.6 9.9 Z" fill="#000" stroke="#fff" stroke-width="0.6" stroke-linejoin="round"/></svg>
</body></html>
